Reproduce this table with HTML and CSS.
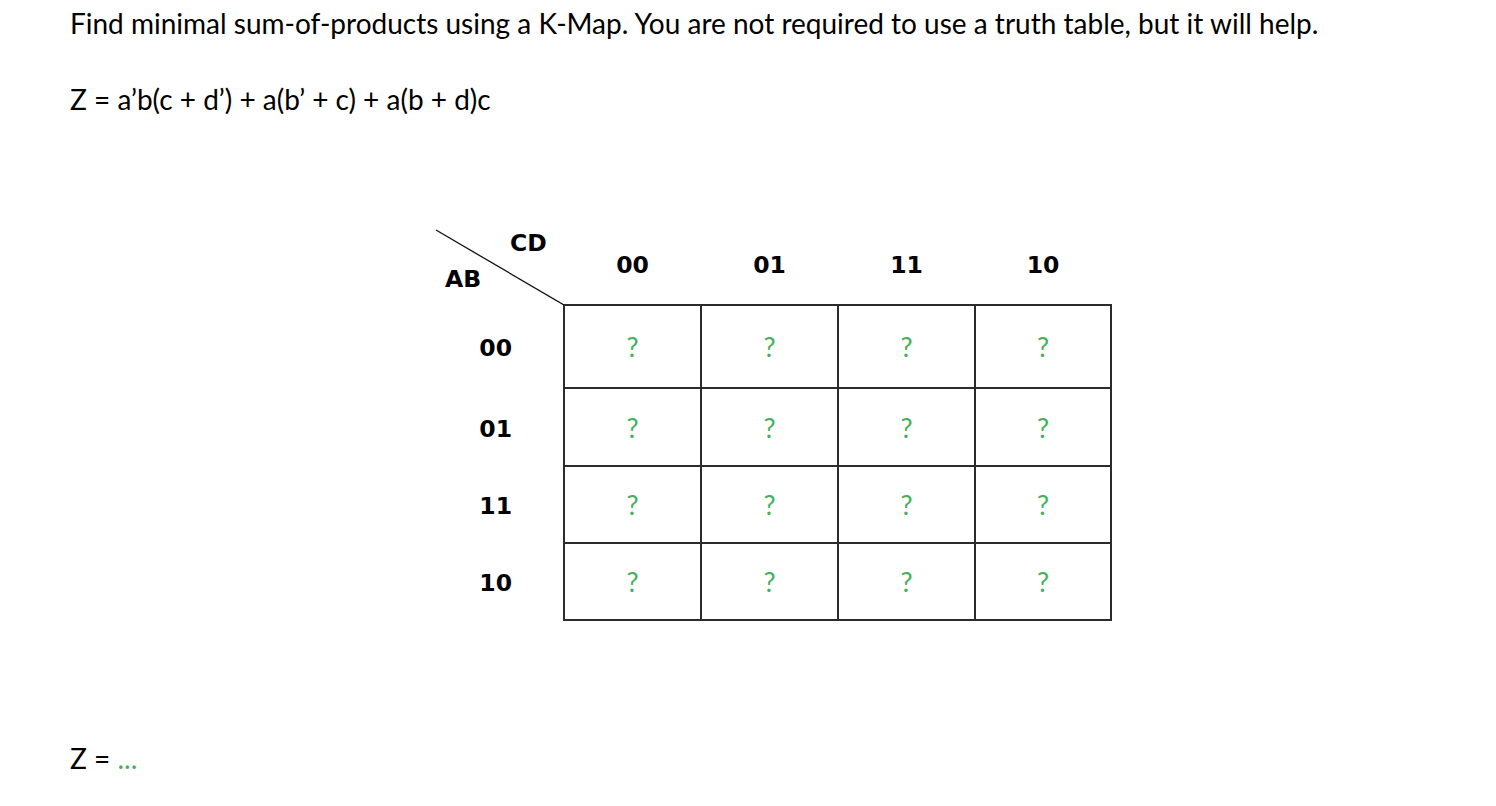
FILE: index.html
```html
<!DOCTYPE html>
<html lang="en">
<head>
<meta charset="utf-8">
<title>K-Map</title>
<link rel="stylesheet" href="styles.css">
</head>
<body>
<main class="page">
  <p class="prompt">Find minimal sum-of-products using a K-Map. You are not required to use a truth table, but it will help.</p>
  <p class="equation">Z = a’b(c + d’) + a(b’ + c) + a(b + d)c</p>

  <div class="kmap">
    <div class="corner">
      <svg class="diag" width="129" height="77" viewBox="0 0 129 77"><line x1="1" y1="2" x2="129" y2="77" stroke="#111" stroke-width="1.3"/></svg>
      <span class="corner-label cd">CD</span>
      <span class="corner-label ab">AB</span>
    </div>
    <div class="colhead">00</div>
    <div class="colhead">01</div>
    <div class="colhead">11</div>
    <div class="colhead">10</div>

    <div class="rowhead">00</div>
    <div class="cell">?</div><div class="cell">?</div><div class="cell">?</div><div class="cell">?</div>

    <div class="rowhead">01</div>
    <div class="cell">?</div><div class="cell">?</div><div class="cell">?</div><div class="cell">?</div>

    <div class="rowhead">11</div>
    <div class="cell">?</div><div class="cell">?</div><div class="cell">?</div><div class="cell">?</div>

    <div class="rowhead">10</div>
    <div class="cell">?</div><div class="cell">?</div><div class="cell">?</div><div class="cell">?</div>
  </div>

  <p class="answer">Z = <span class="dots">...</span></p>
</main>
</body>
</html>
```

FILE: styles.css
```css
html, body {
  margin: 0;
  padding: 0;
  background: #ffffff;
}

.page {
  padding: 0 0 0 70px;
  font-family: "Lato", "Open Sans", sans-serif;
  color: #000;
}

.prompt {
  margin: 0;
  padding-top: 8px;
  font-size: 28px;
  line-height: 30px;
}

.equation {
  margin: 46px 0 0 0;
  font-size: 28px;
  line-height: 30px;
}

.kmap {
  margin: 114px 0 0 365px;
  display: grid;
  grid-template-columns: 129px 137px 137px 137px 136px;
  grid-template-rows: 77px 83px 78px 77px 77px;
  width: max-content;
}

.corner {
  position: relative;
}

.diag {
  position: absolute;
  left: 0;
  top: 0;
}

.corner-label,
.colhead,
.rowhead {
  font-family: "DejaVu Sans", "Verdana", sans-serif;
  font-weight: bold;
  font-size: 23.5px;
  line-height: 24px;
}

.corner-label {
  position: absolute;
}

.cd {
  left: 75px;
  top: 3px;
}

.ab {
  left: 10px;
  top: 39px;
}

.colhead {
  display: flex;
  justify-content: center;
  align-items: flex-start;
  padding-top: 25px;
}

.rowhead {
  display: flex;
  justify-content: flex-end;
  align-items: center;
  padding-right: 52px;
  padding-top: 3px;
}

.cell {
  display: flex;
  justify-content: center;
  align-items: center;
  outline: 2px solid #2b2b2b;
  outline-offset: -1px;
  color: #45b05a;
  font-family: "Lato", sans-serif;
  font-size: 27px;
}

.answer {
  margin: 123px 0 0 0;
  font-size: 28px;
  line-height: 30px;
}

.dots {
  color: #45b05a;
}
```
